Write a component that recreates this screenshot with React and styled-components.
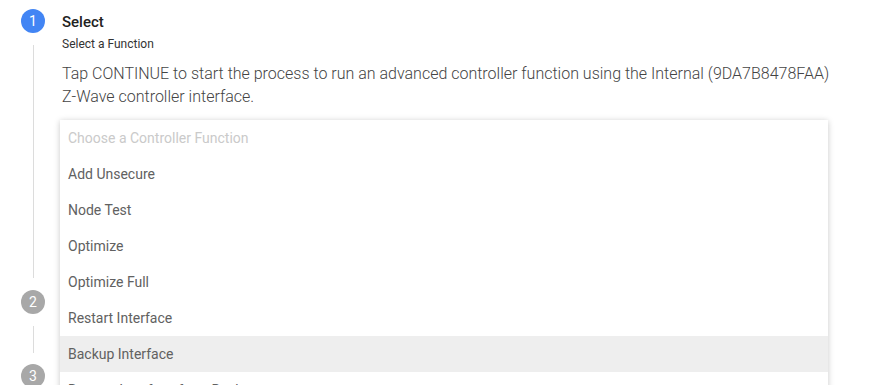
import React from "react";
import styled, { createGlobalStyle } from "styled-components";

const GlobalStyle = createGlobalStyle`
  html, body {
    margin: 0;
    padding: 0;
    background: #fff;
    font-family: Roboto, "Liberation Sans", Arial, sans-serif;
    overflow: hidden;
  }
`;

const Page = styled.div`
  padding: 9px 50px 0 21px;
`;

const Step = styled.div`
  display: flex;
  gap: 17px;
`;

const Rail = styled.div`
  width: 24px;
  display: flex;
  flex-direction: column;
  align-items: center;
  flex-shrink: 0;
`;

const Circle = styled.div`
  width: 24px;
  height: 24px;
  border-radius: 50%;
  background: ${(p) => (p.$active ? "#4285f4" : "#a8a8a8")};
  color: #fff;
  font-size: 14px;
  display: flex;
  align-items: center;
  justify-content: center;
  flex-shrink: 0;
`;

const Connector = styled.div`
  width: 1px;
  flex: 1;
  background: #dcdcdc;
  margin: 12px 0 ${(p) => p.$bottom || 12}px;
  min-height: ${(p) => p.$min || 0}px;
`;

const Body = styled.div`
  flex: 1;
  min-width: 0;
  padding-top: 1px;
  padding-bottom: ${(p) => p.$pad || 0}px;
`;

const Title = styled.div`
  font-size: 15px;
  font-weight: 500;
  color: #222;
  line-height: 24px;
`;

const Subtitle = styled.div`
  font-size: 12px;
  color: #333;
  line-height: 16px;
  margin-top: 2px;
`;

const Description = styled.p`
  margin: 10px -10px 0 0;
  font-size: 16px;
  font-weight: 300;
  color: #444;
  line-height: 23px;
`;

const SelectBox = styled.div`
  position: relative;
  margin: 12px 0 0 -2px;
  height: 36px;
`;

const Menu = styled.ul`
  position: absolute;
  top: 0;
  left: 0;
  right: 0;
  margin: 0;
  padding: 0;
  list-style: none;
  background: #fff;
  box-shadow: 0 1px 6px rgba(0, 0, 0, 0.22);
  z-index: 5;
`;

const Option = styled.li`
  height: 36px;
  display: flex;
  align-items: center;
  padding: 0 8px;
  font-size: 14px;
  color: ${(p) => (p.$placeholder ? "#cacaca" : "#616161")};
  background: ${(p) => (p.$hover ? "#eeeeee" : "transparent")};
  white-space: nowrap;
  overflow: hidden;
`;

const options = [
  "Add Unsecure",
  "Node Test",
  "Optimize",
  "Optimize Full",
  "Restart Interface",
  "Backup Interface",
  "Restore Interface from Backup",
];

export default function App() {
  return (
    <>
      <GlobalStyle />
      <Page>
        <Step>
          <Rail>
            <Circle $active>1</Circle>
            <Connector />
          </Rail>
          <Body $pad={134}>
            <Title>Select</Title>
            <Subtitle>Select a Function</Subtitle>
            <Description>
              Tap CONTINUE to start the process to run an advanced controller
              function using the Internal (9DA7B8478FAA) Z-Wave controller
              interface.
            </Description>
            <SelectBox>
              <Menu>
                <Option $placeholder>Choose a Controller Function</Option>
                {options.map((o) => (
                  <Option key={o} $hover={o === "Backup Interface"}>
                    {o}
                  </Option>
                ))}
              </Menu>
            </SelectBox>
          </Body>
        </Step>
        <Step>
          <Rail>
            <Circle>2</Circle>
            <Connector $min={27} $bottom={11} />
          </Rail>
          <Body>
            <Title>Run</Title>
          </Body>
        </Step>
        <Step>
          <Rail>
            <Circle>3</Circle>
          </Rail>
          <Body>
            <Title>Complete</Title>
          </Body>
        </Step>
      </Page>
    </>
  );
}
